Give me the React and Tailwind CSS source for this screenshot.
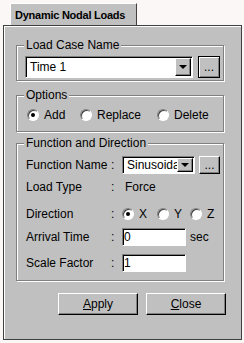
const raised =
  "bg-[#c0c0c0] border border-t-white border-l-white border-r-black border-b-black shadow-[inset_-1px_-1px_0_#808080]";
const focused =
  "bg-[#c0c0c0] border border-black shadow-[inset_1px_1px_0_#fff,inset_-1px_-1px_0_#808080]";
const sunken =
  "bg-white border border-t-[#808080] border-l-[#808080] border-r-white border-b-white shadow-[inset_1px_1px_0_#000]";

const Group = ({ label, className, children }) => (
  <div
    className={`relative w-[208px] border border-[#808080] shadow-[inset_1px_1px_0_#fff,1px_1px_0_#fff] ${className}`}
  >
    <span className="absolute left-[7px] -top-[8px] px-[2px] bg-[#c0c0c0] leading-[14px]">
      {label}
    </span>
    {children}
  </div>
);

const Combo = ({ value, className }) => (
  <div className={`${sunken} flex items-center p-[1px] ${className}`}>
    <span className="flex-1 overflow-hidden whitespace-nowrap pl-[3px]">{value}</span>
    <div
      className={`w-[16px] h-full shrink-0 ${raised} flex items-center justify-center`}
    >
      <div className="w-0 h-0 border-l-[4px] border-r-[4px] border-t-[4px] border-l-transparent border-r-transparent border-t-black" />
    </div>
  </div>
);

const Radio = ({ checked, label, className }) => (
  <div className={`flex items-center gap-[5px] ${className}`}>
    <div className="w-[12px] h-[12px] rounded-full bg-white border border-t-[#808080] border-l-[#808080] border-r-white border-b-white shadow-[inset_1px_1px_0_#404040] flex items-center justify-center">
      {checked && <div className="w-[4px] h-[4px] rounded-full bg-black" />}
    </div>
    <span>{label}</span>
  </div>
);

const Row = ({ label, className, children }) => (
  <div className={`flex items-center h-[18px] ${className}`}>
    <span className="w-[85px] whitespace-nowrap">{label}</span>
    <span className="w-[11px]">:</span>
    {children}
  </div>
);

export default function App() {
  return (
    <div className="w-[244px] h-[343px] bg-[#fcf7f7] overflow-hidden pt-[3px] font-['Liberation_Sans',Arial,sans-serif] text-[12px] leading-[14px] text-black">
      {/* Tab */}
      <div className="ml-[10px] w-[127px] h-[22px] bg-[#c0c0c0] border-t border-l border-r border-t-white border-l-white border-r-[#404040] flex items-center pl-[4px] font-bold text-[11px] tracking-[-0.25px] whitespace-nowrap">
        Dynamic Nodal Loads
      </div>

      {/* Panel */}
      <div className="ml-[3px] w-[239px] h-[315px] bg-[#c0c0c0] border border-[#404040] shadow-[inset_1px_1px_0_#fff] pt-[19px] pl-[12px]">
        <Group label="Load Case Name" className="pt-[10px] pb-[2px] pl-[8px]">
          <div className="flex items-center gap-[5px]">
            <Combo value="Time 1" className="w-[168px] h-[22px]" />
            <button className={`w-[22px] h-[22px] ${focused} flex items-center justify-center`}>
              ...
            </button>
          </div>
        </Group>

        <Group label="Options" className="mt-[14px] pt-[12px] pb-[9px] pl-[10px]">
          <div className="flex items-center h-[14px]">
            <Radio checked label="Add" className="w-[53px]" />
            <Radio label="Replace" className="w-[77px]" />
            <Radio label="Delete" />
          </div>
        </Group>

        <Group label="Function and Direction" className="mt-[11px] pt-[12px] pb-[8px] pl-[9px]">
          <Row label="Function Name">
            <Combo value="Sinusoidal" className="w-[73px] h-[18px]" />
            <button className={`ml-[4px] w-[21px] h-[18px] ${raised} flex items-center justify-center`}>
              ...
            </button>
          </Row>
          <Row label="Load Type" className="mt-[4px]">
            <span className="pl-[3px]">Force</span>
          </Row>
          <Row label="Direction" className="mt-[9px]">
            <Radio checked label="X" className="w-[35px]" />
            <Radio label="Y" className="w-[33px]" />
            <Radio label="Z" />
          </Row>
          <Row label="Arrival Time" className="mt-[5px]">
            <div className={`w-[64px] h-[18px] ${sunken} flex items-center pl-[1px]`}>0</div>
            <span className="ml-[4px]">sec</span>
          </Row>
          <Row label="Scale Factor" className="mt-[8px]">
            <div className={`w-[64px] h-[18px] ${sunken} flex items-center pl-[1px]`}>1</div>
          </Row>
        </Group>

        <div className="mt-[12px] ml-[42px] flex gap-[8px]">
          <button className={`w-[80px] h-[22px] ${raised}`}>
            <span className="underline">A</span>pply
          </button>
          <button className={`w-[80px] h-[22px] ${raised}`}>
            <span className="underline">C</span>lose
          </button>
        </div>
      </div>
    </div>
  );
}
